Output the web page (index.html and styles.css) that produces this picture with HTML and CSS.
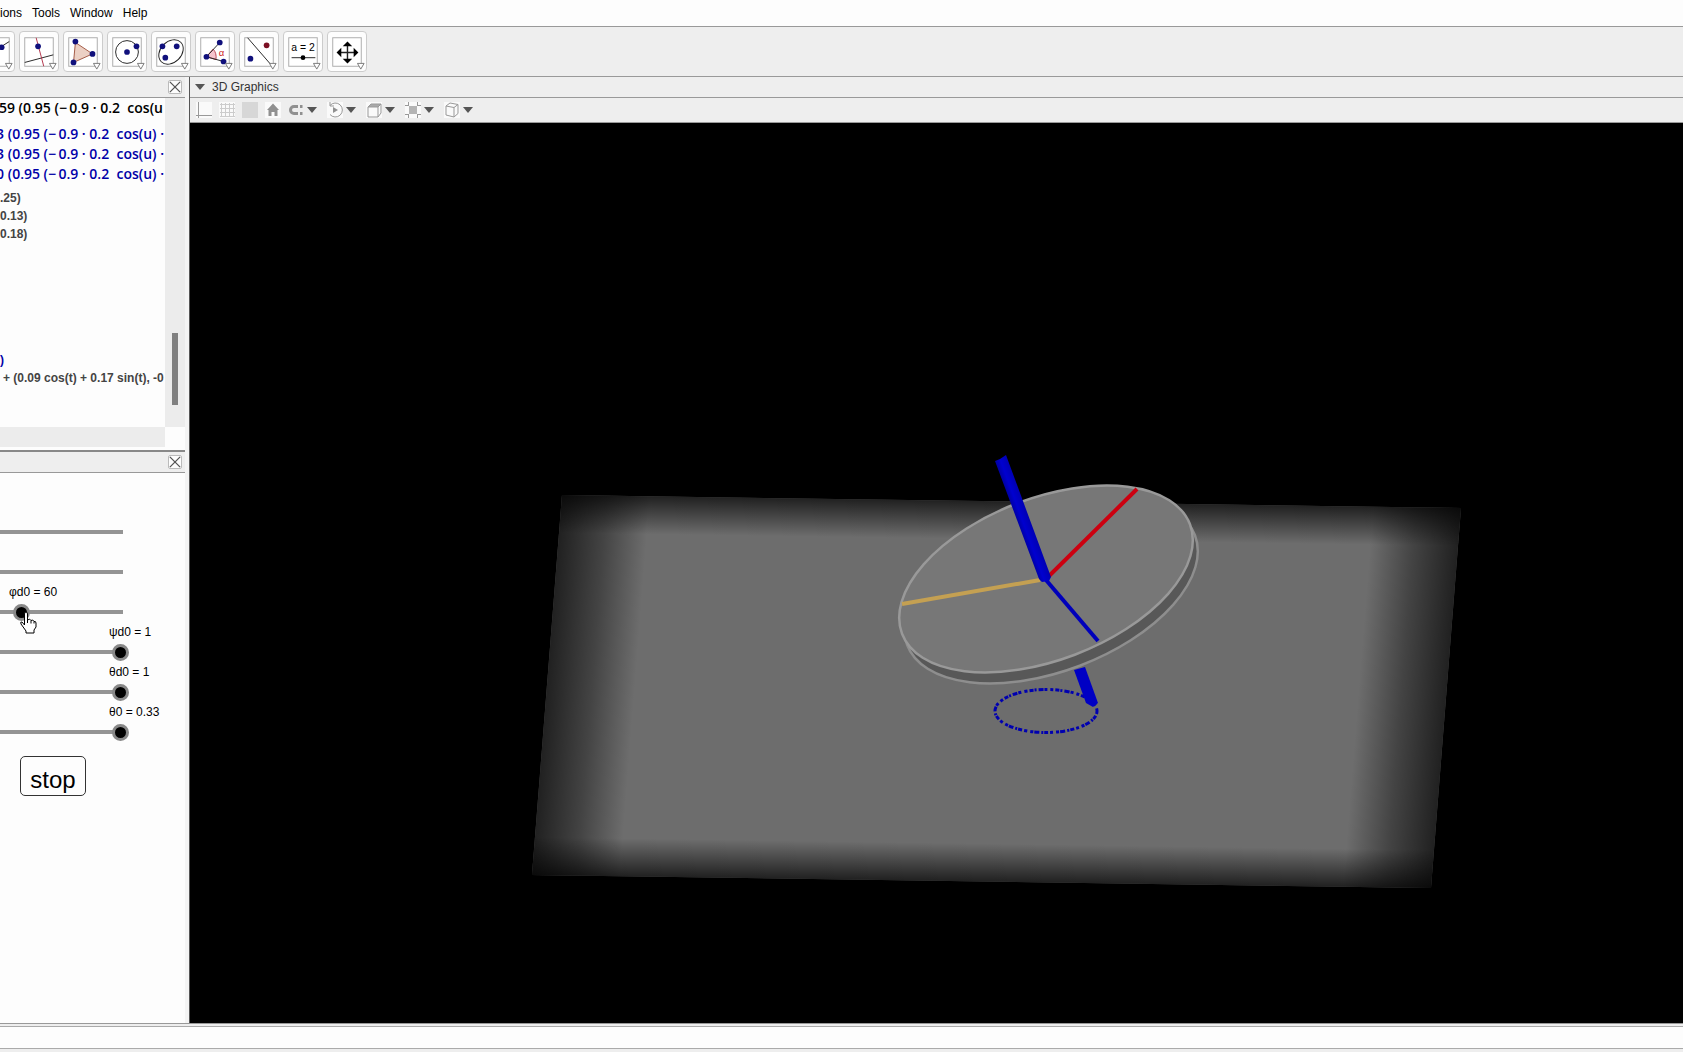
FILE: index.html
```
<!DOCTYPE html>
<html lang="en">
<head>
    <meta charset="UTF-8">
    <meta name="viewport" content="width=device-width, initial-scale=1.0">
    <title>Spinning top - 3D Graphics</title>
    <link rel="stylesheet" href="styles.css">
</head>
<body>
<nav class="menubar">
    <button>ions</button>
    <button>Tools</button>
    <button>Window</button>
    <button>Help</button>
</nav>

<div class="toolbar">
    <button class="tool" aria-label="Line">
        <svg viewBox="0 0 40 40"><rect class="frame" x="5" y="5" width="30" height="30"/><path class="ink" d="M5 28L35 9"/><circle class="pt" cx="27" cy="15" r="3"/><path class="more" d="M31 32h7l-3.500 6z"/></svg>
    </button>
    <button class="tool" aria-label="Perpendicular line">
        <svg viewBox="0 0 40 40"><rect class="frame" x="5" y="5" width="30" height="30"/><path class="ink" d="M5 31L35 23"/><path class="ink red" d="M17 5L25 35"/><circle class="pt" cx="19" cy="14" r="3"/><path class="more" d="M31 32h7l-3.500 6z"/></svg>
    </button>
    <button class="tool" aria-label="Polygon">
        <svg viewBox="0 0 40 40"><rect class="frame" x="5" y="5" width="30" height="30"/><path class="poly" d="M12 10L10 31L30 22z"/><circle class="pt" cx="12" cy="9" r="3"/><circle class="pt" cx="10" cy="31" r="3"/><circle class="pt" cx="30" cy="22" r="3"/><path class="more" d="M31 32h7l-3.500 6z"/></svg>
    </button>
    <button class="tool" aria-label="Circle with center">
        <svg viewBox="0 0 40 40"><rect class="frame" x="5" y="5" width="30" height="30"/><circle class="ink" cx="20" cy="20" r="12"/><circle class="pt" cx="20" cy="20" r="3"/><circle class="pt" cx="30" cy="14" r="3"/><path class="more" d="M31 32h7l-3.500 6z"/></svg>
    </button>
    <button class="tool" aria-label="Ellipse">
        <svg viewBox="0 0 40 40"><rect class="frame" x="5" y="5" width="30" height="30"/><ellipse class="ink" cx="20" cy="20" rx="14.500" ry="11" transform="rotate(-45 20 20)"/><circle class="pt" cx="11" cy="14" r="3"/><circle class="pt" cx="26" cy="14" r="3"/><circle class="pt" cx="14" cy="26" r="3"/><path class="more" d="M31 32h7l-3.500 6z"/></svg>
    </button>
    <button class="tool" aria-label="Angle">
        <svg viewBox="0 0 40 40"><rect class="frame" x="5" y="5" width="30" height="30"/><path class="wedge" d="M11 25L18 17Q22 21 21 28z"/><path class="ink" d="M25 10L11 25L29 30"/><circle class="pt" cx="25" cy="10" r="3"/><circle class="pt" cx="11" cy="25" r="3"/><circle class="pt" cx="29" cy="30" r="3"/><text class="alpha" x="24" y="24">α</text><path class="more" d="M31 32h7l-3.500 6z"/></svg>
    </button>
    <button class="tool" aria-label="Reflect about line">
        <svg viewBox="0 0 40 40"><rect class="frame" x="5" y="5" width="30" height="30"/><path class="ink" d="M8 5L34 35"/><circle class="pt dark-red" cx="28" cy="13" r="3"/><circle class="pt" cx="11" cy="27" r="3"/><path class="more" d="M31 32h7l-3.500 6z"/></svg>
    </button>
    <button class="tool" aria-label="Slider">
        <svg viewBox="0 0 40 40"><rect class="frame" x="5" y="5" width="30" height="30"/><text class="eq" x="20" y="19">a = 2</text><path class="ink" d="M8 26H33"/><circle cx="20" cy="26" r="2.500"/><path class="more" d="M31 32h7l-3.500 6z"/></svg>
    </button>
    <button class="tool" aria-label="Move graphics view">
        <svg viewBox="0 0 40 40"><rect class="frame" x="5" y="5" width="30" height="30"/><path class="ink bold" d="M20.500 12V29M12 20.500H29"/><path d="M20.500 9l5 5h-10zM20.500 32l5-5h-10zM9 20.500l5-5v10zM32 20.500l-5-5v10z"/><path class="more" d="M31 32h7l-3.500 6z"/></svg>
    </button>
</div>

<main class="workspace">
    <aside class="side">
        <section class="algebra">
            <header class="panel-head">
                <button class="close" aria-label="Close algebra view"><svg viewBox="0 0 14 14"><path d="M1 1L13 13M13 1L1 13"/></svg></button>
            </header>
            <div class="algebra-body">
                <div class="rows">
                    <p class="math first">59 (0.95 (−&thinsp;0.9 · 0.2 &nbsp;cos(u</p>
                    <p class="math blue">3 (0.95 (−&thinsp;0.9 · 0.2 &nbsp;cos(u) ·</p>
                    <p class="math blue">3 (0.95 (−&thinsp;0.9 · 0.2 &nbsp;cos(u) ·</p>
                    <p class="math blue">0 (0.95 (−&thinsp;0.9 · 0.2 &nbsp;cos(u) ·</p>
                    <p class="value start">.25)</p>
                    <p class="value">0.13)</p>
                    <p class="value">0.18)</p>
                    <p class="value blue later">)</p>
                    <p class="value wide">+ (0.09 cos(t) + 0.17 sin(t), -0</p>
                </div>
                <div class="vscroll"><div class="vthumb"></div></div>
                <div class="hscroll"></div>
            </div>
        </section>

        <section class="graphics">
            <header class="panel-head">
                <button class="close" aria-label="Close graphics view"><svg viewBox="0 0 14 14"><path d="M1 1L13 13M13 1L1 13"/></svg></button>
            </header>
            <div class="sliders">
                <div class="slider"><span class="slider-label"></span><input type="range" aria-label="First parameter" min="0" max="100" value="0"></div>
                <div class="slider"><span class="slider-label"></span><input type="range" aria-label="Second parameter" min="0" max="100" value="0"></div>
                <div class="slider">
                    <label class="slider-label mid" for="phi">φd0 = 60</label>
                    <input type="range" id="phi" min="0" max="105" value="60">
                    <svg class="pointer" viewBox="0 0 18 24"><path d="M5.500 14V3Q5.500 1 7 1T8.500 3V9Q11 7 12 9.500Q14 8 15 10.500Q17 10 17 12V16L15 19V22H7V20L2 13Q1 10.500 3 11z"/><path d="M8.500 9v3M12 9.500v3M15 10.500v2"/></svg>
                </div>
                <div class="slider">
                    <label class="slider-label end" for="psi">ψd0 = 1</label>
                    <input type="range" id="psi" min="0" max="1" value="1">
                </div>
                <div class="slider">
                    <label class="slider-label end" for="thetad">θd0 = 1</label>
                    <input type="range" id="thetad" min="0" max="1" value="1">
                </div>
                <div class="slider">
                    <label class="slider-label end" for="theta">θ0 = 0.33</label>
                    <input type="range" id="theta" min="0" max="0.33" step="0.01" value="0.33">
                </div>
                <button class="stop">stop</button>
            </div>
        </section>
    </aside>

    <section class="view3d">
        <header class="panel-head titled">
            <svg class="caret" viewBox="0 0 10 6"><path d="M0 0H10L5 6z"/></svg>
            <h1>3D Graphics</h1>
        </header>
        <div class="stylebar">
            <button class="opt" aria-label="Axes"><svg class="icon" viewBox="0 0 16 16"><path class="paper" d="M0 0h16v16H0z"/><path class="line" d="M2.500 0V16M0 13.500H16"/></svg></button>
            <button class="opt" aria-label="Grid"><svg class="icon" viewBox="0 0 16 16"><path class="paper" d="M0 0h16v16H0z"/><path class="line faint" d="M2.500 1V15M6.500 1V15M10.500 1V15M14.500 1V15M1 2.500H16M1 6.500H16M1 10.500H16M1 14.500H16"/></svg></button>
            <button class="opt" aria-label="Plane"><svg class="icon" viewBox="0 0 16 16"><path fill="#d7d7d7" d="M0 0h16v16H0z"/></svg></button>
            <button class="opt" aria-label="Home"><svg class="icon" viewBox="0 0 16 16"><path class="paper" d="M0 0h16v16H0z"/><path class="solid" d="M8 1.500L14 8h-1.500v6h-3V10h-3v4h-3V8H2z"/></svg></button>
            <button class="opt" aria-label="Point capturing"><svg class="icon" viewBox="0 0 16 16"><path d="M10 4.500H6A3.500 3.500 0 0 0 6 11.500H10" fill="none" stroke="#909090" stroke-width="3"/><path class="solid" d="M12 3h2.500v3H12zM12 10h2.500v3H12z"/></svg><svg class="caret" viewBox="0 0 10 6"><path d="M0 0H10L5 6z"/></svg></button>
            <button class="opt" aria-label="Rotate view"><svg class="icon" viewBox="0 0 16 16"><path class="paper" d="M0 0h16v16H0z"/><path class="line" d="M3 3.500A7 7 0 1 1 3 12.500M3 0V4H7"/><path class="solid" d="M6 5l5 3l-5 3z"/></svg><svg class="caret" viewBox="0 0 10 6"><path d="M0 0H10L5 6z"/></svg></button>
            <button class="opt" aria-label="View direction"><svg class="icon" viewBox="0 0 16 16"><path class="paper" d="M0 0h16v16H0z"/><path fill="#aaa" d="M2 5l3-3h10l-3 3z"/><path class="line" d="M2 5H12V15H2zL5 2H15V11L12 15M12 5L15 2"/></svg><svg class="caret" viewBox="0 0 10 6"><path d="M0 0H10L5 6z"/></svg></button>
            <button class="opt" aria-label="Clipping"><svg class="icon" viewBox="0 0 16 16"><path class="paper" d="M0 0h16v16H0z"/><path fill="#b4b4b4" d="M4 4h8v8H4z"/><path class="line" d="M3.500 0V4M12.500 0V4M3.500 12V16M12.500 12V16M0 3.500H4M0 12.500H4M12 3.500H16M12 12.500H16"/></svg><svg class="caret" viewBox="0 0 10 6"><path d="M0 0H10L5 6z"/></svg></button>
            <button class="opt" aria-label="Projection"><svg class="icon" viewBox="0 0 16 16"><path class="paper" d="M0 0h16v16H0z"/><path class="line" d="M2 4L10 5.500V15L2 13zL6 1L14 2.500L10 5.500M14 2.500V11.500L10 15"/></svg><svg class="caret" viewBox="0 0 10 6"><path d="M0 0H10L5 6z"/></svg></button>
        </div>
        <svg class="scene" viewBox="190 123 1493 900">
            <defs>
                <linearGradient id="fadeX">
                    <stop offset="0" stop-color="#000" stop-opacity="0.7"/>
                    <stop offset="0.05" stop-color="#000" stop-opacity="0.38"/>
                    <stop offset="0.098" stop-color="#000" stop-opacity="0"/>
                    <stop offset="0.902" stop-color="#000" stop-opacity="0"/>
                    <stop offset="0.95" stop-color="#000" stop-opacity="0.38"/>
                    <stop offset="1" stop-color="#000" stop-opacity="0.7"/>
                </linearGradient>
                <linearGradient id="fadeY" x2="0" y2="1">
                    <stop offset="0" stop-color="#000" stop-opacity="0.7"/>
                    <stop offset="0.1" stop-color="#000" stop-opacity="0"/>
                    <stop offset="0.9" stop-color="#000" stop-opacity="0"/>
                    <stop offset="1" stop-color="#000" stop-opacity="0.7"/>
                </linearGradient>
                <linearGradient id="rod" gradientUnits="userSpaceOnUse" x1="1018" y1="522" x2="1029" y2="518">
                    <stop offset="0" stop-color="#0000a8"/>
                    <stop offset="0.4" stop-color="#0000d0"/>
                    <stop offset="1" stop-color="#0000b4"/>
                </linearGradient>
            </defs>

            <!-- floor plane -->
            <g transform="matrix(1 0.0145 -0.079 1 562 495)">
                <rect width="899" height="380" fill="#6d6d6d"/>
                <rect width="899" height="380" fill="url(#fadeX)"/>
                <rect width="899" height="380" fill="url(#fadeY)"/>
            </g>

            <!-- trace of the tip -->
            <ellipse class="trace" cx="1046" cy="711" rx="51" ry="21.500"/>
            <path fill="#0000c4" d="M1074 670L1085 667L1098 703L1093 707L1086 703z"/>

            <!-- disc -->
            <ellipse cx="1051" cy="590" rx="154" ry="81" transform="rotate(-20.800 1051 590)" fill="#585858" stroke="#8e8e8e" stroke-width="2.500"/>
            <ellipse cx="1046" cy="579" rx="154" ry="81" transform="rotate(-20.800 1046 579)" fill="#777" stroke="#999" stroke-width="2.500"/>
            <g stroke-width="4">
                <path stroke="#c4a052" d="M902 604L1040 580"/>
                <path stroke="#cc0010" d="M1049 576L1137 489"/>
                <path stroke="#0000bb" d="M1046 580L1098 641"/>
            </g>
            <path fill="url(#rod)" d="M995 461L1000 459L1006 455L1051 577L1049 581L1042 582L1039 579z"/>
        </svg>
    </section>
</main>

<footer class="inputbar"><input type="text" aria-label="Input"></footer>
</body>
</html>
```

FILE: styles.css
```
* {
    box-sizing: border-box;
}
body {
    font-family: "Liberation Sans", Arial, sans-serif;
    font-size: 12px;
    margin: 0;
    height: 100vh;
    display: flex;
    flex-direction: column;
    overflow: hidden;
    background-color: #eee;
    color: #000;
}
button {
    font: inherit;
    color: inherit;
    padding: 0;
    border: none;
    background: none;
}
svg {
    display: block;
}
p, h1 {
    margin: 0;
}

/* menu and toolbar */
.menubar {
    display: flex;
    gap: 10px;
    height: 27px;
    padding-bottom: 1px;
    background-color: #fdfdfd;
    border-bottom: 1px solid #999;
}
.toolbar {
    display: flex;
    gap: 4px;
    height: 50px;
    padding-top: 4px;
    margin-left: -25px;
    border-bottom: 1px solid #999;
}
.tool {
    width: 40px;
    height: 41px;
    flex: none;
    background-color: #fdfdfd;
    border: 1px solid #ccc;
    border-radius: 4px;
}
.tool svg {
    width: 38px;
    height: 38px;
}
.frame {
    fill: #fff;
    stroke: #aaa;
}
.ink {
    fill: none;
    stroke: #222;
}
.bold {
    stroke-width: 1.5;
}
.red {
    stroke: #b03048;
}
.pt {
    fill: #10107c;
}
.dark-red {
    fill: #7c1024;
}
.poly {
    fill: #ecd0c4;
    stroke: #a05540;
}
.wedge {
    fill: #f6c4cc;
    stroke: #b84050;
}
.more {
    fill: #fff;
    stroke: #777;
}
.alpha {
    fill: #c22;
    font-size: 10px;
}
.eq {
    font-size: 11px;
    text-anchor: middle;
}

/* panels */
.workspace {
    flex: 1;
    min-height: 0;
    display: flex;
    border-bottom: 1px solid #999;
}
.side {
    width: 190px;
    display: flex;
    flex-direction: column;
    padding-right: 4px;
    border-right: 1px solid #555;
    background-color: #f4f4f4;
}
.panel-head {
    display: flex;
    align-items: center;
    justify-content: flex-end;
    height: 21px;
    padding-right: 3px;
    background-color: #eee;
    border-bottom: 1px solid #999;
}
.close {
    width: 14px;
    height: 14px;
    background-color: #fdfdfd;
    border: 1px solid #bbb;
    border-radius: 2px;
}
.close path {
    stroke: #555;
    stroke-width: 1.5;
}
.algebra {
    height: 373px;
    background-color: #fdfdfd;
}
.algebra-body {
    display: grid;
    grid-template-columns: 1fr 20px;
    grid-template-rows: 329px 20px;
}
.rows {
    overflow: hidden;
    white-space: nowrap;
}
.math {
    font-family: "Open Sans", sans-serif;
    font-size: 14px;
    font-weight: 600;
    line-height: 20px;
    display: flex;
    justify-content: flex-end;
    padding-right: 1px;
}
.math.first {
    margin-bottom: 6px;
    padding-right: 2px;
}
.blue {
    color: #0000a8;
}
.value {
    font-weight: bold;
    line-height: 18px;
    color: #444;
}
.value.start {
    margin-top: 5px;
}
.value.later {
    margin-top: 108px;
    color: #0000a8;
}
.value.wide {
    padding-left: 3px;
}
.vscroll {
    background-color: #ececec;
    padding: 235px 7px 0;
}
.vthumb {
    height: 72px;
    background-color: #808080;
}
.hscroll {
    background-color: #ececec;
}

.graphics {
    flex: 1;
    border-top: 2px solid #888;
    background-color: #fdfdfd;
}
.sliders {
    padding-top: 30px;
    overflow: hidden;
}
.slider {
    position: relative;
    height: 40px;
}
.slider-label {
    display: block;
    height: 20px;
    line-height: 18px;
}
.mid {
    padding-left: 9px;
}
.end {
    padding-left: 109px;
}
input[type=range] {
    appearance: none;
    display: block;
    width: 249px;
    height: 18px;
    margin: 0 0 0 -120px;
    background: linear-gradient(#949494, #949494) 0 50% / 243px 4px no-repeat;
}
input[type=range]::-webkit-slider-thumb {
    appearance: none;
    width: 17px;
    height: 17px;
    border: 3px solid #888;
    border-radius: 50%;
    background-color: #000;
}
.pointer {
    position: absolute;
    left: 19px;
    top: 28px;
    width: 18px;
    height: 24px;
    z-index: 1;
}
.pointer path {
    fill: #fff;
    stroke: #000;
}
.stop {
    width: 66px;
    height: 40px;
    margin: 13px 0 0 20px;
    padding-top: 8px;
    font-size: 24px;
    line-height: 30px;
    border: 1px solid #333;
    border-radius: 5px;
}

/* 3D view */
.view3d {
    flex: 1;
    min-width: 0;
    display: flex;
    flex-direction: column;
    background-color: #000;
}
.titled {
    justify-content: flex-start;
    gap: 7px;
    padding-left: 5px;
}
.titled h1 {
    font-size: 12px;
    font-weight: normal;
    color: #333;
}
.caret {
    width: 10px;
    height: 6px;
    fill: #555;
}
.stylebar {
    display: flex;
    align-items: center;
    gap: 7px;
    height: 25px;
    padding-left: 6px;
    background-color: #eee;
    border-bottom: 1px solid #999;
}
.opt {
    display: flex;
    align-items: center;
    gap: 3px;
}
.opt:has(.caret) {
    margin-right: 3px;
}
.icon {
    width: 16px;
    height: 16px;
}
.paper {
    fill: #fafafa;
}
.line {
    fill: none;
    stroke: #999;
}
.faint {
    stroke: #ccc;
}
.solid {
    fill: #909090;
}
.scene {
    flex: 1;
    min-height: 0;
    width: 100%;
}
.trace {
    fill: none;
    stroke: #0000b0;
    stroke-width: 3;
    stroke-dasharray: 3 2 4 1 2 2 5 1 3 3;
}

.inputbar {
    height: 28px;
    padding: 2px 0 3px;
}
.inputbar input {
    display: block;
    width: 100%;
    height: 23px;
    padding: 0 4px;
    background-color: #fdfdfd;
    border: 1px solid #aaa;
    border-width: 1px 0;
}
```
